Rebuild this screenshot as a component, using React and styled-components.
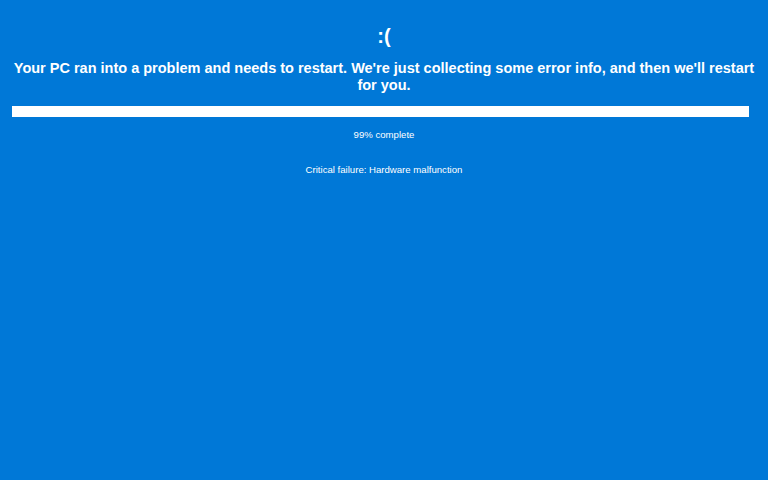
import React from "react";
import styled, { createGlobalStyle } from "styled-components";

const Global = createGlobalStyle`
  html, body { margin: 0; padding: 0; background: #0078d7; }
  body { font-family: "Liberation Sans", Arial, sans-serif; color: #fff; }
`;

const Screen = styled.div`
  min-height: 480px;
  background: #0078d7;
  color: #ffffff;
  padding: 24px 12px;
  box-sizing: border-box;
  display: flex;
  flex-direction: column;
  align-items: stretch;
  text-align: center;
`;

const Face = styled.div`
  font-size: 20px;
  font-weight: bold;
  line-height: 24px;
`;

const Message = styled.div`
  font-size: 14.5px;
  font-weight: bold;
  line-height: 17px;
  margin-top: 12px;
`;

const Track = styled.div`
  height: 11px;
  margin-top: 12px;
`;

const Fill = styled.div`
  height: 100%;
  background: #ffffff;
`;

const Small = styled.div`
  font-size: 9.6px;
  line-height: 12px;
  margin-top: ${(p) => p.$gap}px;
`;

export default function App() {
  const progress = 99;
  return (
    <>
      <Global />
      <Screen>
        <Face>:(</Face>
        <Message>
          Your PC ran into a problem and needs to restart. We're just collecting
          some error info, and then we'll restart for you.
        </Message>
        <Track>
          <Fill style={{ width: `${progress}%` }} />
        </Track>
        <Small $gap={12}>{progress}% complete</Small>
        <Small $gap={23}>Critical failure: Hardware malfunction</Small>
      </Screen>
    </>
  );
}
